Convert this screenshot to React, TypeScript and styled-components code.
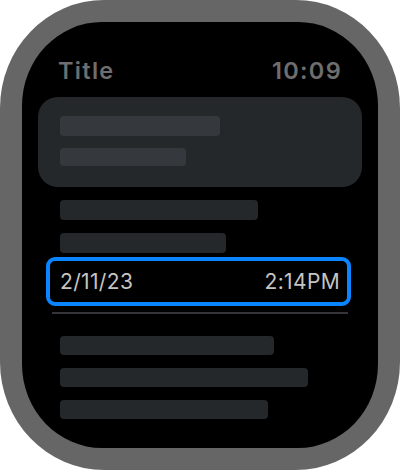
import styled, { createGlobalStyle } from 'styled-components';

const GlobalStyle = createGlobalStyle`
	html, body {
		margin: 0;
		padding: 0;
		background: #ffffff;
		font-family: Inter, 'Noto Sans', sans-serif;
	}
`;

const Bezel = styled.div`
	width: 400px;
	height: 470px;
	box-sizing: border-box;
	padding: 22px;
	background: #666666;
	border-radius: 104px / 108px;
`;

const Screen = styled.div`
	height: 100%;
	box-sizing: border-box;
	background: #000000;
	border-radius: 80px / 84px;
	padding: 35px 16px 0;
	display: flex;
	flex-direction: column;
	overflow: hidden;
`;

const Header = styled.div`
	display: flex;
	justify-content: space-between;
	align-items: baseline;
	padding: 0 20px 0 20px;
	height: 28px;
	line-height: 28px;
	font-size: 23.5px;
	font-weight: 600;
	color: #6e6e6e;
	letter-spacing: 1.3px;
`;

const Card = styled.div`
	margin-top: 12px;
	height: 90px;
	box-sizing: border-box;
	background: #25282b;
	border-radius: 20px;
	padding: 19px 22px 0;
	display: flex;
	flex-direction: column;
	gap: 12px;
`;

const Bar = styled.div<{ w: number; h?: number; light?: boolean }>`
	width: ${({ w }) => w}px;
	height: ${({ h }) => h ?? 19}px;
	border-radius: 4px;
	background: ${({ light }) => (light ? '#35393d' : '#25282b')};
	flex-shrink: 0;
`;

const List = styled.div<{ top: number }>`
	margin-top: ${({ top }) => top}px;
	padding-left: 22px;
	display: flex;
	flex-direction: column;
	gap: 13px;
`;

const SelectedRow = styled.div`
	margin: 4px 11px 0 8px;
	height: 49px;
	box-sizing: border-box;
	border: 4px solid #0a84ff;
	border-radius: 9px;
	padding: 0 7px 0 10px;
	display: flex;
	justify-content: space-between;
	align-items: center;
	font-size: 21px;
	color: #c4c4c4;
	letter-spacing: 0.35px;
`;

const Separator = styled.div`
	margin: 6px 14px 0;
	height: 1.5px;
	background: #333538;
`;

export default function App() {
	return (
		<>
			<GlobalStyle />
			<Bezel>
				<Screen>
					<Header>
						<span>Title</span>
						<span>10:09</span>
					</Header>
					<Card>
						<Bar w={160} h={20} light />
						<Bar w={126} h={18} light />
					</Card>
					<List top={13}>
						<Bar w={198} h={20} />
						<Bar w={166} h={20} />
					</List>
					<SelectedRow>
						<span>2/11/23</span>
						<span>2:14PM</span>
					</SelectedRow>
					<Separator />
					<List top={22}>
						<Bar w={214} />
						<Bar w={248} />
						<Bar w={208} />
					</List>
				</Screen>
			</Bezel>
		</>
	);
}
